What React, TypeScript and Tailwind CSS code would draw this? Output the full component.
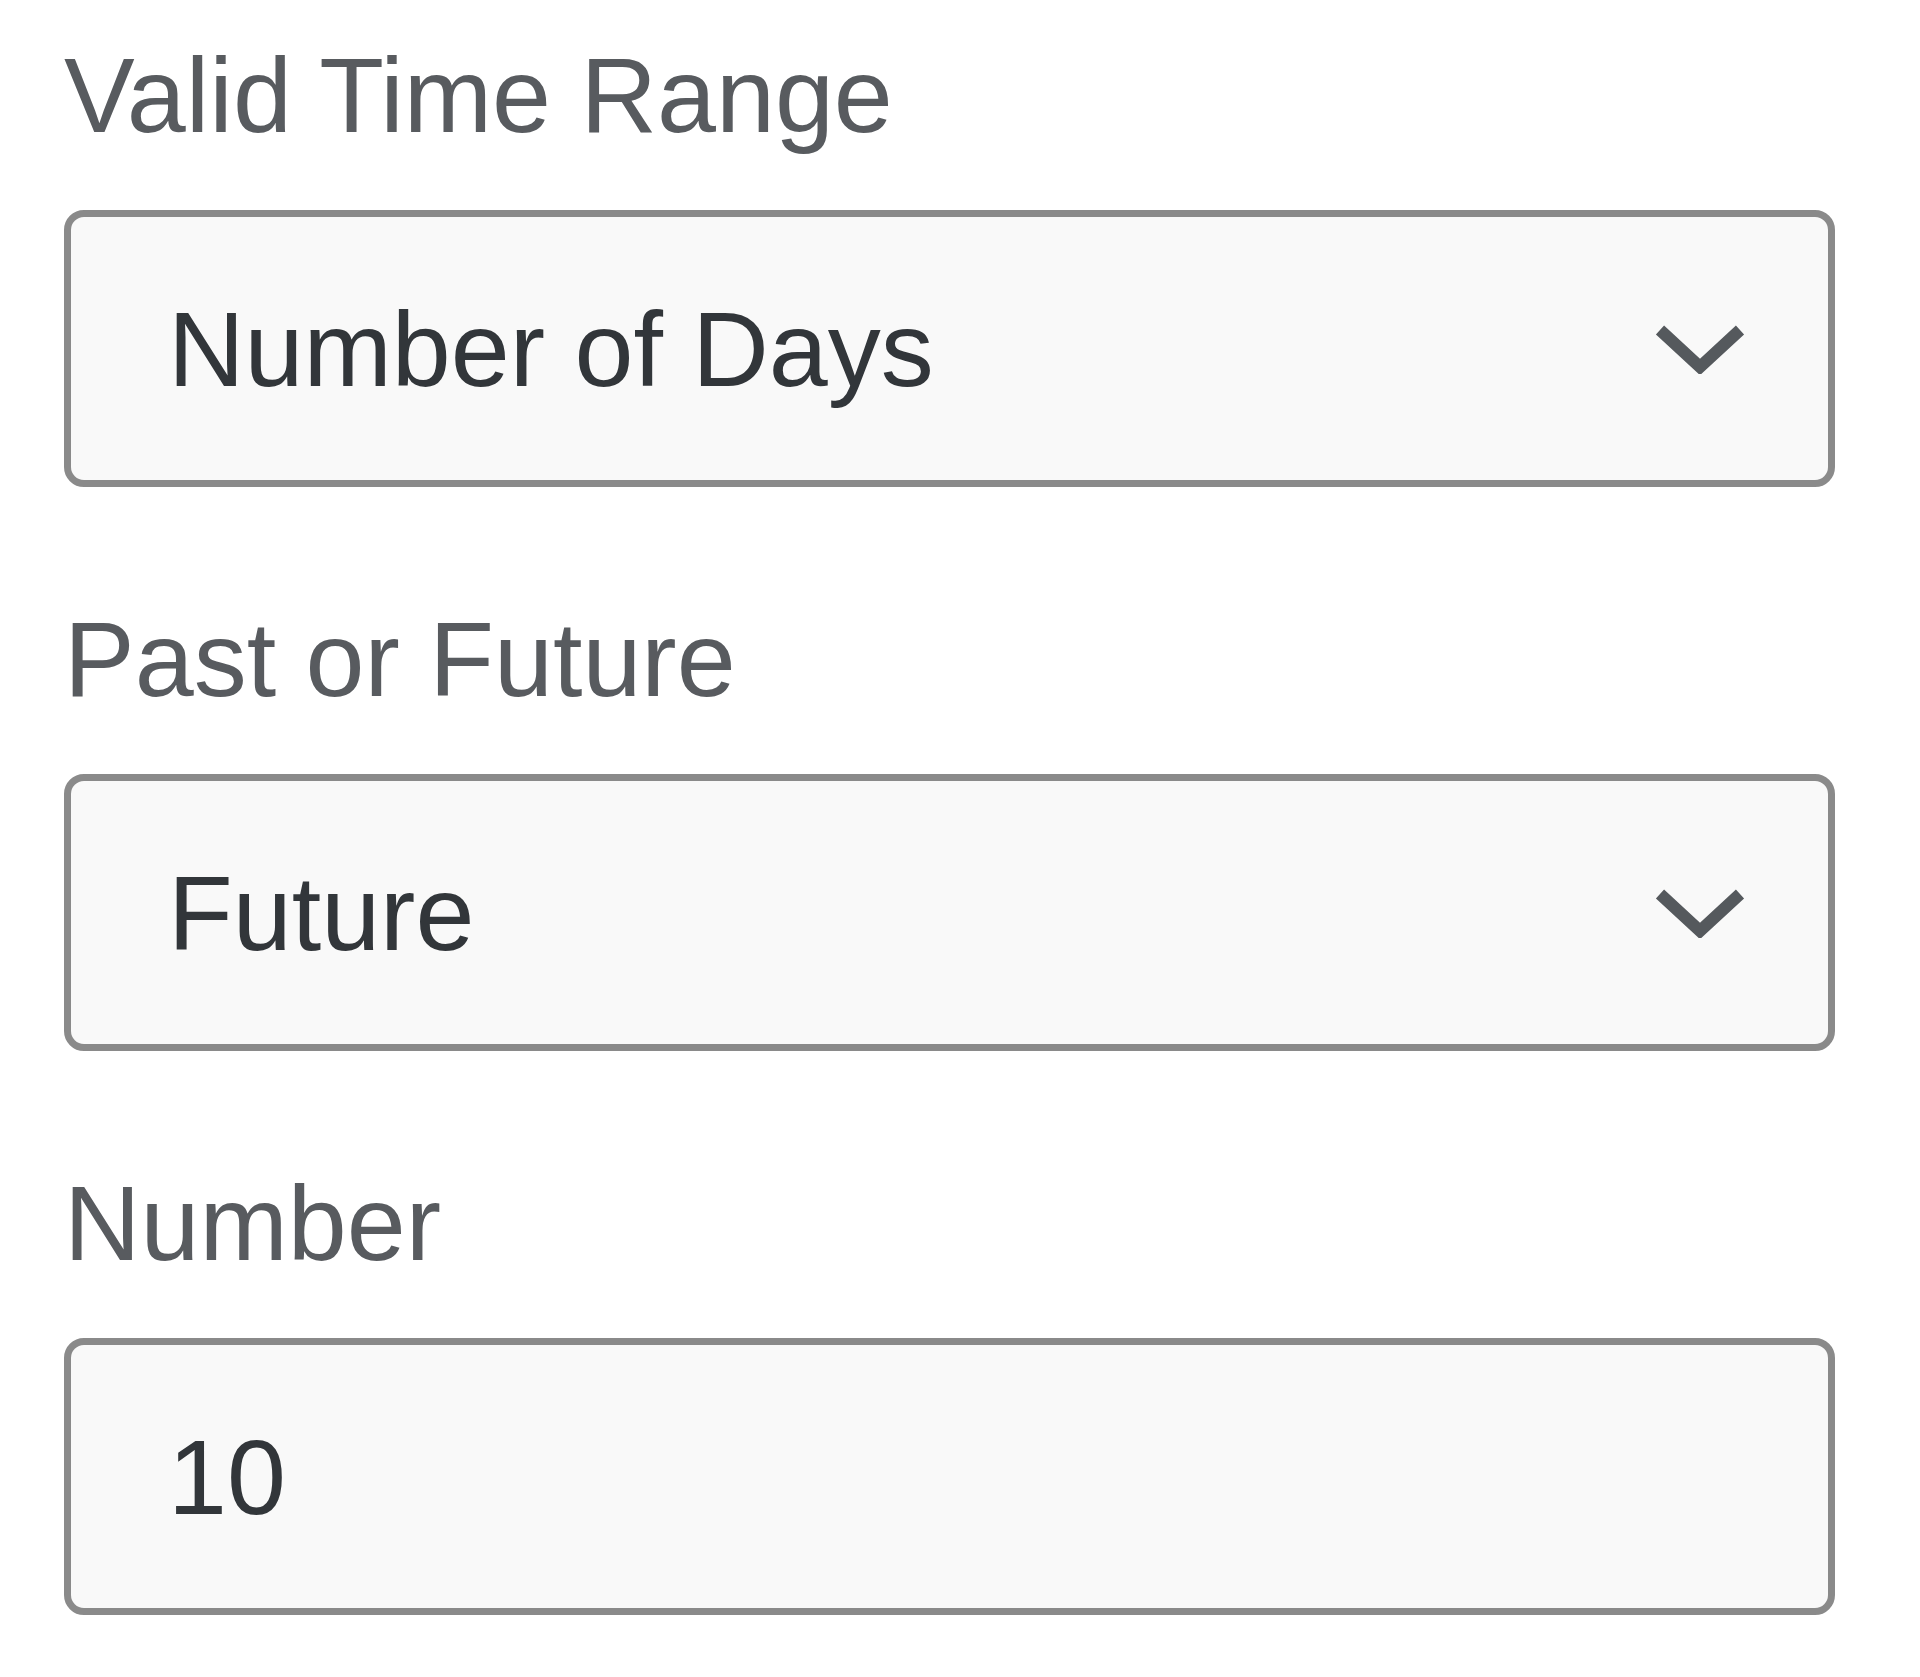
import React from 'react';

interface FieldProps {
  label: string;
  value: string;
  select?: boolean;
}

const Chevron: React.FC = () => (
  <svg width="92" height="50" viewBox="0 0 92 50" className="shrink-0" aria-hidden="true">
    <polyline points="6,6 46,43 86,6" fill="none" stroke="#55595d" strokeWidth="12" strokeLinejoin="miter" />
  </svg>
);

const Field: React.FC<FieldProps> = ({ label, value, select }) => (
  <div className="flex flex-col">
    <label className="text-[106px] leading-none text-[#585b5f] font-['Liberation_Sans',Arial,sans-serif]">
      {label}
    </label>
    <div className="mt-[62px] h-[277px] flex items-center rounded-[20px] border-[7px] border-[#8a8a8a] bg-[#f9f9f9] pl-[97px] pr-[82px]">
      <span className="flex-1 text-[106px] leading-none text-[#32363a] font-['Liberation_Sans',Arial,sans-serif]">
        {value}
      </span>
      {select && <Chevron />}
    </div>
  </div>
);

export default function App() {
  return (
    <div className="min-h-[1677px] w-full bg-white pl-[64px] pr-[85px] pt-[42px]">
      <div className="flex flex-col gap-[119px]">
        <Field label="Valid Time Range" value="Number of Days" select />
        <Field label="Past or Future" value="Future" select />
        <Field label="Number" value="10" />
      </div>
    </div>
  );
}
